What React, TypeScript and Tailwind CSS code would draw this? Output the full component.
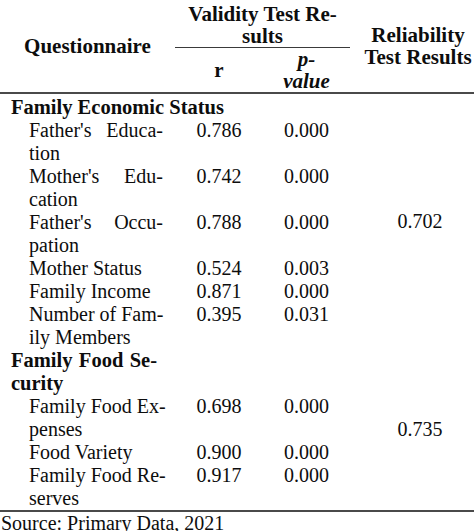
type Item = {
  lines: string[];
  r: string;
  p: string;
  justify?: boolean;
};

type Group = {
  title: string[];
  titleJustify?: boolean;
  reliability: string;
  items: Item[];
};

const groups: Group[] = [
  {
    title: ["Family Economic Status"],
    reliability: "0.702",
    items: [
      { lines: ["Father's Educa-", "tion"], r: "0.786", p: "0.000", justify: true },
      { lines: ["Mother's Edu-", "cation"], r: "0.742", p: "0.000", justify: true },
      { lines: ["Father's Occu-", "pation"], r: "0.788", p: "0.000", justify: true },
      { lines: ["Mother Status"], r: "0.524", p: "0.003" },
      { lines: ["Family Income"], r: "0.871", p: "0.000" },
      { lines: ["Number of Fam-", "ily Members"], r: "0.395", p: "0.031" },
    ],
  },
  {
    title: ["Family Food Se-", "curity"],
    titleJustify: true,
    reliability: "0.735",
    items: [
      { lines: ["Family Food Ex-", "penses"], r: "0.698", p: "0.000" },
      { lines: ["Food Variety"], r: "0.900", p: "0.000" },
      { lines: ["Family Food Re-", "serves"], r: "0.917", p: "0.000" },
    ],
  },
];

function Lines({ lines, justify }: { lines: string[]; justify?: boolean }) {
  return (
    <>
      {lines.map((line, i) => (
        <span
          key={i}
          className={
            "block whitespace-nowrap " +
            (justify && i === 0 ? "text-justify [text-align-last:justify]" : "")
          }
        >
          {line}
        </span>
      ))}
    </>
  );
}

export default function App() {
  return (
    <div className="w-[474px] h-[531px] overflow-hidden bg-white text-[#0d0d0d] font-['Liberation_Serif',serif] text-[20px]">
      <table className="w-[474px] table-fixed border-collapse">
        <colgroup>
          <col className="w-[175px]" />
          <col className="w-[88px]" />
          <col className="w-[87px]" />
          <col className="w-[124px]" />
        </colgroup>
        <thead className="font-bold text-[21px] leading-[22px]">
          <tr>
            <th rowSpan={2} className="align-middle text-center font-bold border-b-2 border-[#4a4a4a]">
              Questionnaire
            </th>
            <th colSpan={2} className="pt-[3px] text-center font-bold border-b border-[#3a3a3a]">
              Validity Test Re-
              <br />
              sults
            </th>
            <th rowSpan={2} className="align-middle text-center font-bold pl-3 whitespace-nowrap border-b-2 border-[#4a4a4a]">
              Reliability
              <br />
              Test Results
            </th>
          </tr>
          <tr className="border-b-2 border-[#4a4a4a]">
            <th className="h-[44px] align-middle text-center font-bold">r</th>
            <th className="align-middle text-center font-bold italic">
              p-
              <br />
              value
            </th>
          </tr>
        </thead>
        <tbody className="leading-[23px] border-b-2 border-[#4a4a4a]">
          {groups.map((g, gi) => (
            <>
              <tr key={"g" + gi}>
                <td className={"pl-[11px] font-bold text-[20.5px] " + (gi === 0 ? "pt-[2px] " : "") + (g.titleJustify ? "pr-[18px]" : "pr-[12px]")}>
                  <Lines lines={g.title} justify={g.titleJustify} />
                </td>
                <td />
                <td />
                <td rowSpan={g.items.length + 1} className="align-middle text-center pl-4">
                  {g.reliability}
                </td>
              </tr>
              {g.items.map((it, ii) => (
                <tr key={gi + "-" + ii}>
                  <td className="pl-[29px] pr-[12px] align-top">
                    <Lines lines={it.lines} justify={it.justify} />
                  </td>
                  <td className="align-top text-center">{it.r}</td>
                  <td className="align-top text-center">{it.p}</td>
                </tr>
              ))}
            </>
          ))}
        </tbody>
      </table>
      <p className="leading-[22px] pl-[1px]">Source: Primary Data, 2021</p>
    </div>
  );
}
